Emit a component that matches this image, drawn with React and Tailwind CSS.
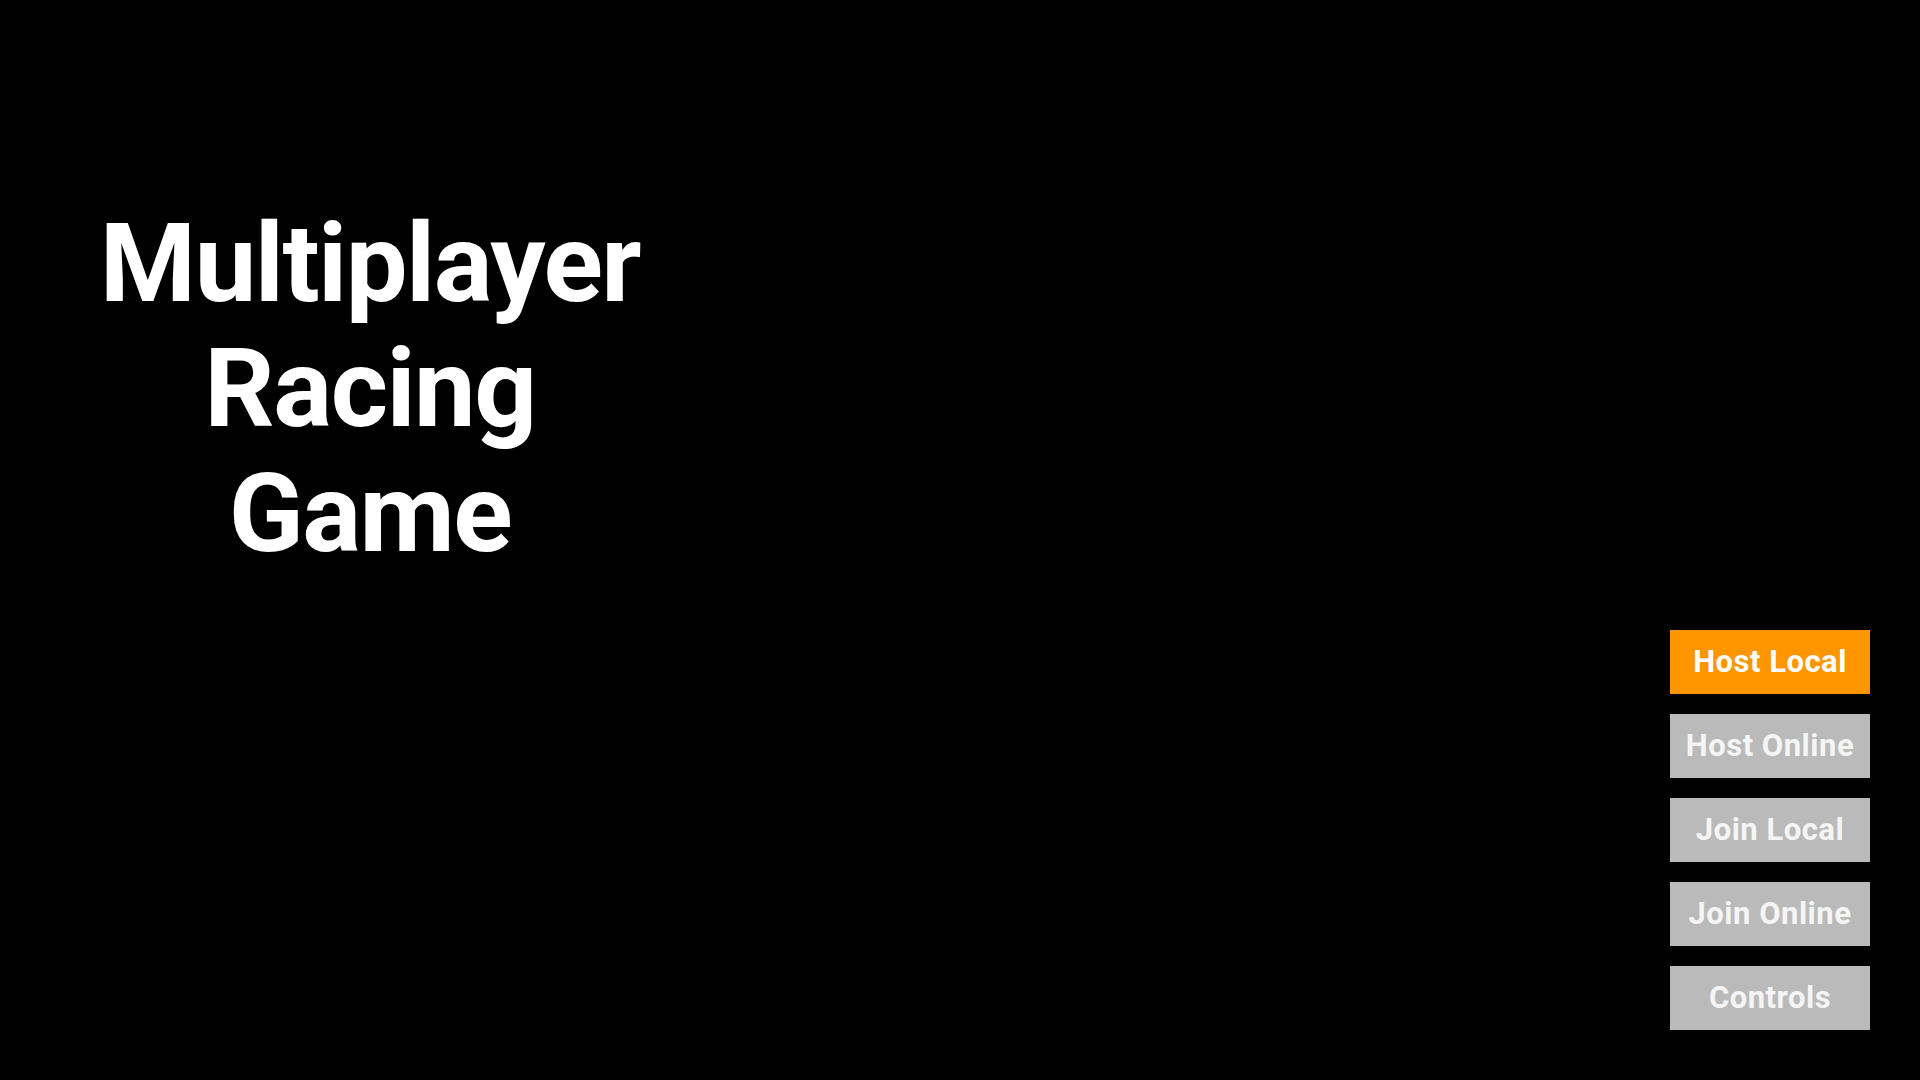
const buttons = [
  { label: "Host Local", active: true },
  { label: "Host Online" },
  { label: "Join Local" },
  { label: "Join Online" },
  { label: "Controls" },
];

export default function App() {
  return (
    <div
      className="h-screen w-full bg-black flex justify-between overflow-hidden"
      style={{ fontFamily: "Roboto, 'Liberation Sans', sans-serif" }}
    >
      {/* title */}
      <div className="w-[740px] pt-[201px]">
        <h1 className="text-center text-white font-bold text-[110px] leading-[125px] tracking-[-1.5px]">
          Multiplayer
          <br />
          Racing
          <br />
          Game
        </h1>
      </div>

      {/* menu */}
      <div className="flex flex-col justify-end gap-[20px] pr-[50px] pb-[50px]">
        {buttons.map((b) => (
          <button
            key={b.label}
            className={
              "w-[200px] h-[64px] flex items-center justify-center font-bold text-[31px] tracking-[0.5px] " +
              (b.active ? "bg-[#ff9600] text-white" : "bg-[#bababa] text-[#f5f5f5]")
            }
          >
            {b.label}
          </button>
        ))}
      </div>
    </div>
  );
}
